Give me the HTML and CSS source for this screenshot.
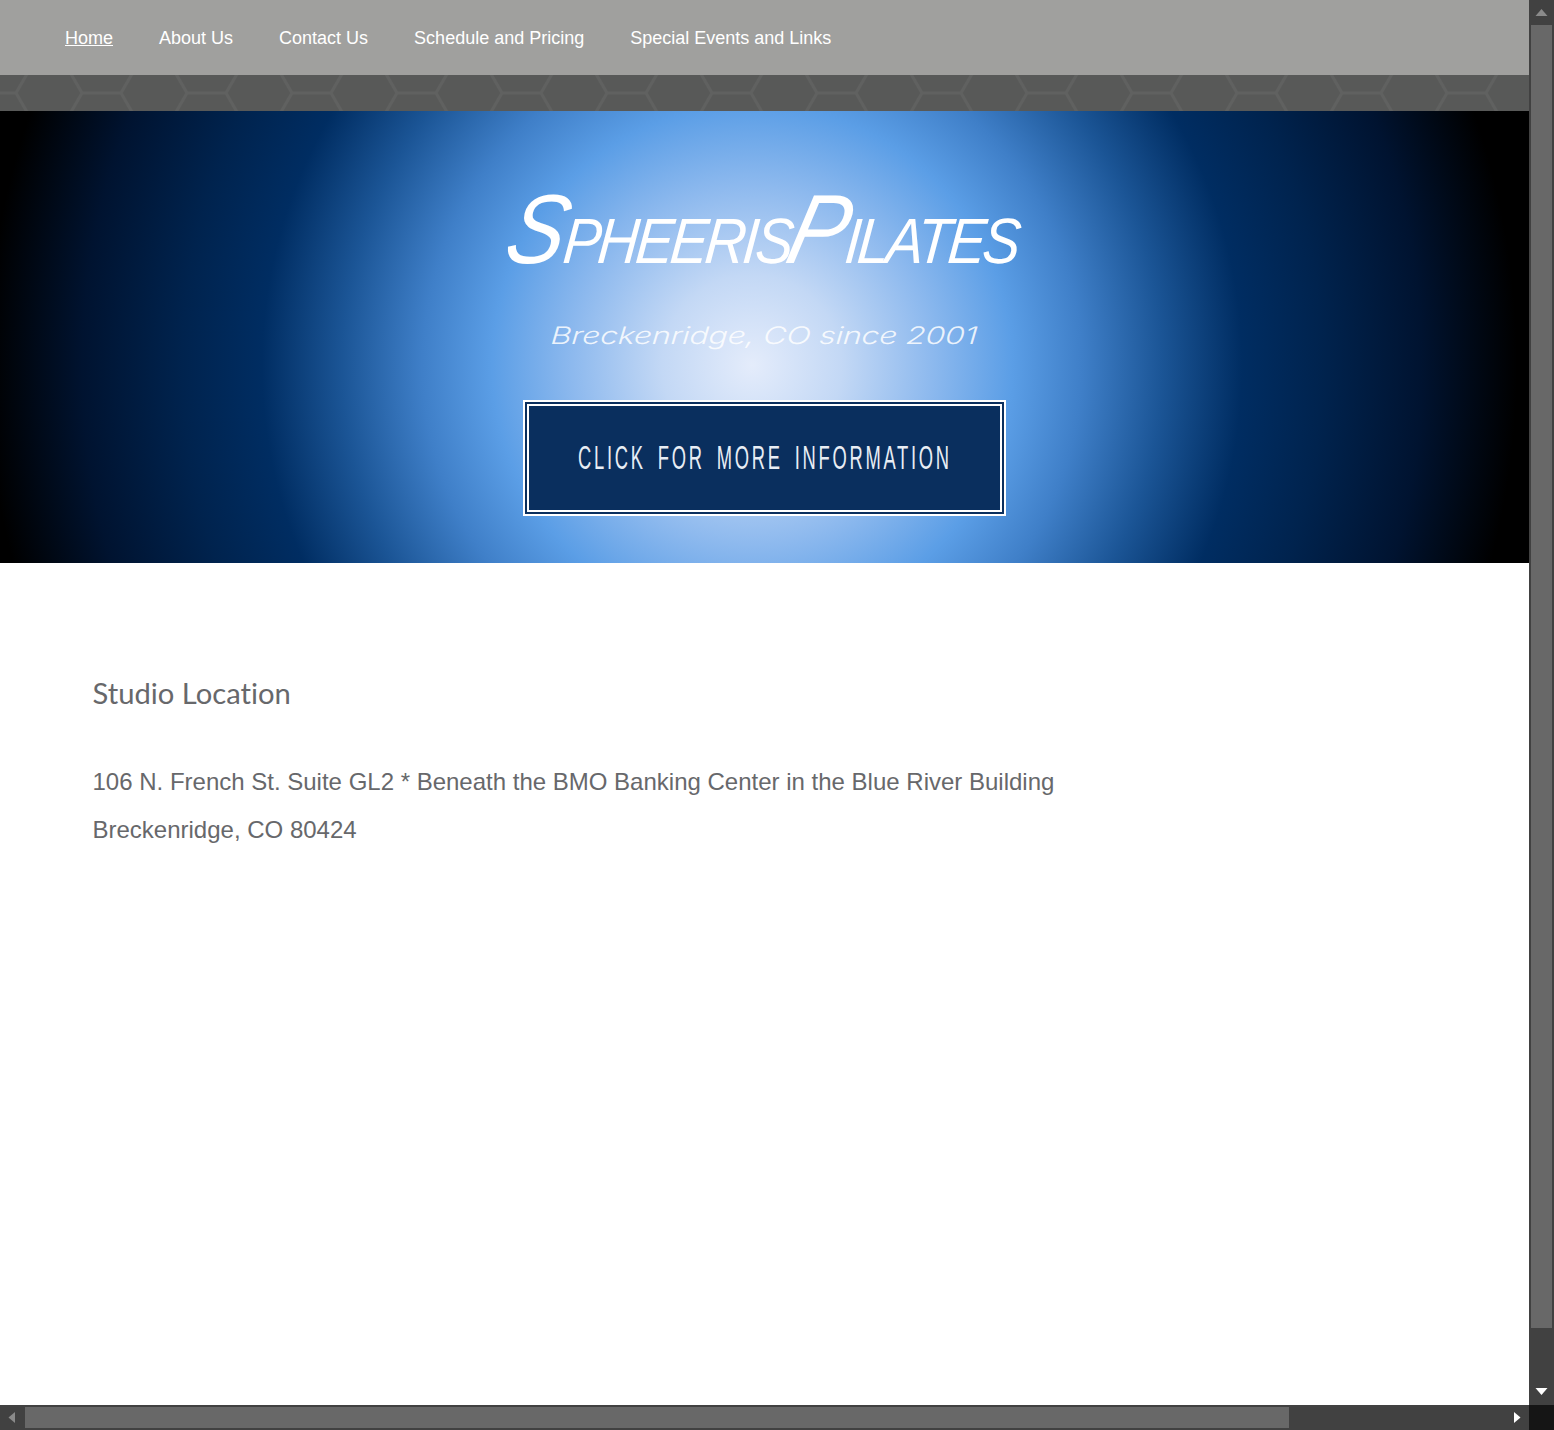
FILE: index.html
```html
<!DOCTYPE html>
<html lang="en">
<head>
<meta charset="utf-8">
<title>Spheeris Pilates</title>
<link rel="stylesheet" href="styles.css">
</head>
<body>
<div class="window">
  <main class="page">
    <nav class="nav">
      <a class="nav-link current" href="#">Home</a>
      <a class="nav-link" href="#">About Us</a>
      <a class="nav-link" href="#">Contact Us</a>
      <a class="nav-link" href="#">Schedule and Pricing</a>
      <a class="nav-link" href="#">Special Events and Links</a>
    </nav>
    <div class="strip">
      <svg class="strip-svg" width="1529" height="36" aria-hidden="true">
        <defs>
          <pattern id="hex" x="82" y="0" width="105" height="36" patternUnits="userSpaceOnUse">
            <path d="M0 18L-11 -1M0 18L-11 37M0 18H39L50 -1M39 18L50 37M105 18L94 -1M105 18L94 37" fill="none" stroke="#606160" stroke-width="3"/>
          </pattern>
        </defs>
        <rect width="1529" height="36" fill="url(#hex)"/>
      </svg>
    </div>
    <section class="hero">
      <h1 class="logo"><span class="cap">S</span>PHEERIS<span class="cap">P</span>ILATES</h1>
      <p class="tagline">Breckenridge, CO since 2001</p>
      <a class="cta" href="#"><span class="cta-text">CLICK FOR MORE INFORMATION</span></a>
    </section>
    <section class="content">
      <h2 class="heading">Studio Location</h2>
      <p class="line">106 N. French St. Suite GL2 * Beneath the BMO Banking Center in the Blue River Building</p>
      <p class="line">Breckenridge, CO 80424</p>
    </section>
  </main>
  <div class="vbar">
    <svg class="arrow" width="25" height="25" aria-hidden="true"><path d="M6.500 16L12.500 9L18.500 16Z" fill="#8a8a8a"/></svg>
    <div class="vtrack"><div class="vthumb"></div></div>
    <svg class="arrow" width="25" height="25" aria-hidden="true"><path d="M6.500 8H18.500L12.500 15Z" fill="#fff"/></svg>
  </div>
  <div class="hbar">
    <svg class="arrow" width="25" height="25" aria-hidden="true"><path d="M15 7V18L8.500 12.500Z" fill="#8a8a8a"/></svg>
    <div class="htrack"><div class="hthumb"></div></div>
    <svg class="arrow" width="25" height="25" aria-hidden="true"><path d="M10 7V18L16.500 12.500Z" fill="#fff"/></svg>
  </div>
  <div class="corner"></div>
</div>
</body>
</html>
```
FILE: styles.css
```css
* { box-sizing: border-box; }
html, body { margin: 0; height: 100%; overflow: hidden; }
body { font-family: "Liberation Sans", Arial, sans-serif; background: #fff; }
.window {
  width: 1554px; height: 1430px;
  display: grid;
  grid-template-columns: 1529px 25px;
  grid-template-rows: 1405px 25px;
}
.page { overflow: hidden; background: #fff; }
.nav {
  height: 75px; background: #a0a09e;
  display: flex; align-items: center; gap: 46px;
  padding: 0 0 0 65px;
}
.nav-link { color: #fff; font-size: 18px; text-decoration: none; line-height: 22px; }
.nav-link.current { text-decoration: underline; }
.strip { height: 36px; background: #585958; overflow: hidden; }
.strip-svg { display: block; }
.hero {
  height: 452px;
  display: flex; flex-direction: column; align-items: center;
  padding-top: 76px;
  background: radial-gradient(circle 775px at 752px 254px,
    #e4ecfb 0, #c3d8f5 90px, #8db9ee 180px, #5b9ee6 260px, #3f7fc8 330px, #1b5596 410px, #002d62 490px, #00234e 570px, #001330 670px, #000 765px);
}
.logo {
  margin: 0; height: 84px; color: #fff;
  font: italic 400 64px/84px "Liberation Sans", Arial, sans-serif;
  letter-spacing: -3.500px; white-space: nowrap;
  transform: scaleX(.885) skewX(-6deg);
}
.cap { display: inline-block; font-size: 98px; line-height: 84px; transform: skewX(-10deg); }
.tagline {
  margin: 50px 0 0; color: rgba(255,255,255,.85);
  font: italic 300 24px/30px Inter, "Liberation Sans", sans-serif;
  transform: scaleX(1.34) skewX(-3deg); letter-spacing: -0.2px;
  white-space: nowrap;
}
.cta {
  margin-top: 49px; width: 483px; height: 116px;
  background: #0a2f5e;
  border: 2px solid #fff;
  padding: 2px 2px 4px;
  display: flex; align-items: center; justify-content: center;
  box-shadow: inset 0 0 0 2px #0a2f5e, inset 0 0 0 4px #fff;
  text-decoration: none;
}
.cta-text {
  flex: none; color: #e8edf4; font: 400 34px/36px "Liberation Sans", sans-serif;
  letter-spacing: 5px; word-spacing: 8px; white-space: pre;
  transform: scaleX(.54);
}
.content { padding: 111px 0 0 92.500px; color: #67686b; }
.heading { margin: 0 0 46px; font: 400 29.200px/38px Lato, "Open Sans", sans-serif; font-variant-ligatures: none; }
.line { margin: 0; font-size: 24px; line-height: 48px; }
.vbar { grid-column: 2; grid-row: 1; background: #414141; display: flex; flex-direction: column; }
.vtrack { flex: 1; padding: 0 2px; }
.vthumb { height: 1303px; background: #686868; }
.hbar { grid-column: 1; grid-row: 2; background: #414141; display: flex; }
.htrack { flex: 1; padding: 2px 0; }
.hthumb { width: 1264px; height: 21px; background: #686868; }
.arrow { display: block; flex: none; }
.corner { background: #151515; }
```
